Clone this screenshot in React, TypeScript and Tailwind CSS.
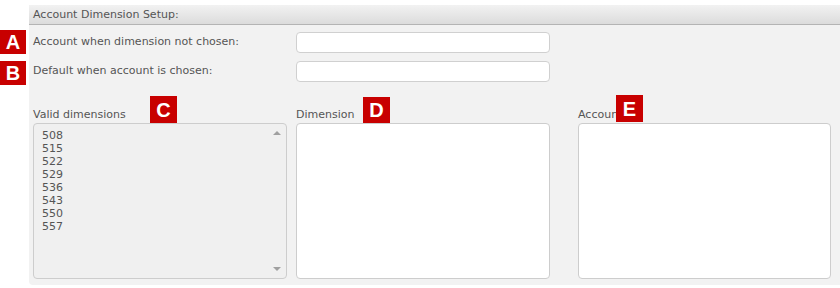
const font = "font-['DejaVu_Sans',Verdana,sans-serif]"

const validDimensions = ['508', '515', '522', '529', '536', '543', '550', '557']

function Badge({ letter, className }: { letter: string; className: string }) {
  return (
    <div
      className={`absolute flex items-center justify-center bg-[#c80000] text-white font-bold text-[20px] leading-none font-['Liberation_Sans',Arial,sans-serif] ${className}`}
    >
      {letter}
    </div>
  )
}

function FieldRow({ label }: { label: string }) {
  return (
    <div className="flex items-center">
      <div className="w-[263px] text-[11px] text-[#555]">{label}</div>
      <div className="h-[21px] w-[254px] rounded-[4px] border border-[#d0d0d0] bg-white" />
    </div>
  )
}

function ListColumn({
  label,
  width,
  children,
  grey,
}: {
  label: string
  width: string
  children?: React.ReactNode
  grey?: boolean
}) {
  return (
    <div className={`flex flex-col ${width}`}>
      <div className="h-[17px] text-[11px] leading-[17px] text-[#555]">{label}</div>
      <div
        className={`relative h-[156px] rounded-[4px] border border-[#cdcdcd] ${grey ? 'bg-[#f0f0f0]' : 'bg-white'}`}
      >
        {children}
      </div>
    </div>
  )
}

export default function App() {
  return (
    <div className={`relative h-[288px] w-[840px] overflow-hidden bg-white ${font}`}>
      <div className="ml-[29px] mt-[5px] flex h-[280px] w-[820px] flex-col rounded-bl-[4px] bg-[#f2f2f2]">
        <div className="h-[20px] border-b border-[#b4b4b4] bg-gradient-to-b from-[#f2f2f2] to-[#dcdcdc] pl-[4px] text-[11px] leading-[19px] text-[#555]">
          Account Dimension Setup:
        </div>
        <div className="flex flex-col pl-[4px] pt-[7px]">
          <div className="flex flex-col gap-[8px]">
            <FieldRow label="Account when dimension not chosen:" />
            <FieldRow label="Default when account is chosen:" />
          </div>
          <div className="mt-[24px] flex">
            <ListColumn label="Valid dimensions" width="w-[254px]" grey>
              <div className="pl-[8px] pt-[5px] text-[11px] leading-[13px] text-[#555]">
                {validDimensions.map(d => (
                  <div key={d}>{d}</div>
                ))}
              </div>
              <div className="absolute right-[5px] top-[7px] h-0 w-0 border-x-[4px] border-b-[4px] border-x-transparent border-b-[#a0a0a0]" />
              <div className="absolute bottom-[7px] right-[5px] h-0 w-0 border-x-[4px] border-t-[4px] border-x-transparent border-t-[#a0a0a0]" />
            </ListColumn>
            <div className="ml-[9px]">
              <ListColumn label="Dimension" width="w-[254px]" />
            </div>
            <div className="ml-[28px]">
              <ListColumn label="Account" width="w-[253px]" />
            </div>
          </div>
        </div>
      </div>

      <Badge letter="A" className="left-0 top-[30px] h-[24px] w-[26px]" />
      <Badge letter="B" className="left-0 top-[61px] h-[24px] w-[26px]" />
      <Badge letter="C" className="left-[150px] top-[96px] h-[27px] w-[27px]" />
      <Badge letter="D" className="left-[363px] top-[97px] h-[26px] w-[27px]" />
      <Badge letter="E" className="left-[616px] top-[95px] h-[27px] w-[27px]" />
    </div>
  )
}
